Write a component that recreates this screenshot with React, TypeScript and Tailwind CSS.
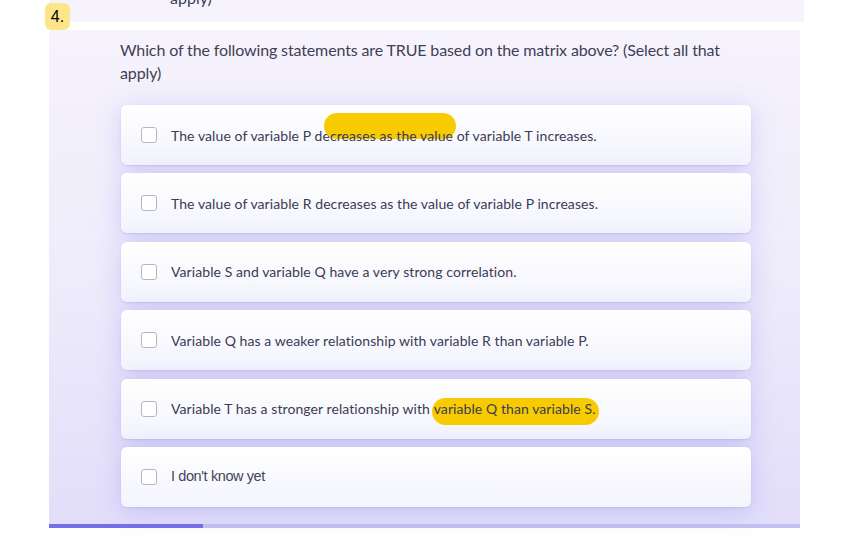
import React from "react";

const options: { text: React.ReactNode }[] = [
  {
    text: (
      <>
        The value of variable P de
        <span className="relative">
          <span className="absolute -left-[6px] -right-[3px] -top-[14px] bottom-[5px] rounded-full bg-[#f7cb00]" />
          <span className="relative">creases as the value</span>
        </span>{" "}
        of variable T increases.
      </>
    ),
  },
  { text: "The value of variable R decreases as the value of variable P increases." },
  { text: "Variable S and variable Q have a very strong correlation." },
  { text: "Variable Q has a weaker relationship with variable R than variable P." },
  {
    text: (
      <>
        Variable T has a stronger relationship with{" "}
        <span className="relative">
          <span className="absolute -left-[2px] -right-[3px] -top-[2px] -bottom-[8px] rounded-full bg-[#f7cb00]" />
          <span className="relative">variable Q than variable S.</span>
        </span>
      </>
    ),
  },
];

function Option({ children, plain }: { children: React.ReactNode; plain?: boolean }) {
  return (
    <div className="flex h-[60px] items-center gap-[14px] rounded-md bg-gradient-to-b from-white to-[#f3f4fd] px-5 shadow-[0_4px_26px_rgba(120,110,235,0.26),0_1px_2px_rgba(90,90,140,0.15)]">
      <span className="h-4 w-4 shrink-0 rounded-[3px] border-[1.5px] border-[#b3b8bf] bg-white" />
      <span
        className={
          plain
            ? "text-[14.5px] tracking-[-0.4px] text-[#44445a] [font-family:'Liberation_Sans',sans-serif]"
            : "relative z-0 text-[14px] tracking-[0.08px] text-[#3b3b55] [font-family:Lato,sans-serif]"
        }
      >
        {children}
      </span>
    </div>
  );
}

export default function App() {
  return (
    <div className="relative h-[542px] w-[846px] overflow-hidden bg-white [font-family:Lato,sans-serif]">
      <div className="absolute left-[45px] top-[3px] z-10 flex h-[27px] w-[25px] items-center justify-center rounded-md bg-[#fde68a] text-[16px] text-black [font-family:'Liberation_Sans',sans-serif]">
        4.
      </div>
      <div className="ml-[49px] mr-[42px] h-[22px] overflow-hidden bg-[#f6f3fd]">
        <p className="-mt-[14px] pl-[121px] text-[16px] text-[#3f3f55]">apply)</p>
      </div>
      <div className="ml-[49px] mt-[8px] w-[751px] bg-gradient-to-b from-[#f6f3fd] via-[#eeebfb] to-[#e2defa]">
        <div className="pt-[8px] pl-[71px]">
          <p className="w-[620px] text-[16px] leading-[23px] tracking-[-0.13px] text-[#3f3f55]">
            Which of the following statements are TRUE based on the matrix above? (Select all that apply)
          </p>
        </div>
        <div className="mt-[21px] flex flex-col gap-[8.4px] pl-[72px] pr-[49px] pb-[17px]">
          {options.map((o, i) => (
            <Option key={i}>{o.text}</Option>
          ))}
          <Option plain>I don't know yet</Option>
        </div>
        <div className="flex h-[4px] bg-[#c3c1f1]">
          <div className="w-[154px] bg-[#766ee9]" />
        </div>
      </div>
    </div>
  );
}
